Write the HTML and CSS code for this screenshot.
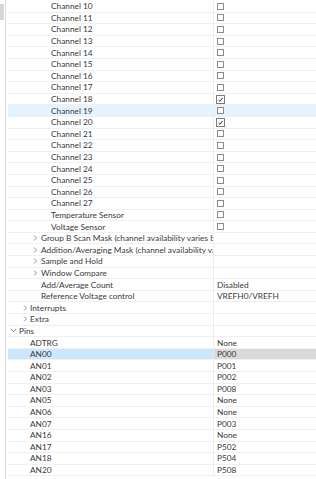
FILE: index.html
```html
<!DOCTYPE html>
<html>

<head>
    <meta charset="UTF-8">
    <title>Properties</title>
    <link rel="stylesheet" href="styles.css">
</head>

<body>
    <div class="frame">
        <div class="scroll-tab"></div>
        <div class="tree" id="tree"></div>
    </div>
    <script>
        // rows: [label, level, value, type, state]
        const rows = [];
        for (let i = 10; i <= 27; i++) {
            rows.push(['Channel ' + i, 4, '', 'check', i === 18 || i === 20]);
        }
        rows.push(['Temperature Sensor', 4, '', 'check', false]);
        rows.push(['Voltage Sensor', 4, '', 'check', false]);
        rows.push(['Group B Scan Mask (channel availability varies by MCU)', 3, '', 'closed']);
        rows.push(['Addition/Averaging Mask (channel availability varies by MCU)', 3, '', 'closed']);
        rows.push(['Sample and Hold', 3, '', 'closed']);
        rows.push(['Window Compare', 3, '', 'closed']);
        rows.push(['Add/Average Count', 3, 'Disabled']);
        rows.push(['Reference Voltage control', 3, 'VREFH0/VREFH']);
        rows.push(['Interrupts', 2, '', 'closed']);
        rows.push(['Extra', 2, '', 'closed']);
        rows.push(['Pins', 1, '', 'open']);
        const pins = [['ADTRG', 'None'], ['AN00', 'P000'], ['AN01', 'P001'], ['AN02', 'P002'],
            ['AN03', 'P008'], ['AN05', 'None'], ['AN06', 'None'], ['AN07', 'P003'],
            ['AN16', 'None'], ['AN17', 'P502'], ['AN18', 'P504'], ['AN20', 'P508']];
        pins.forEach(p => rows.push([p[0], 2, p[1]]));

        const tree = document.getElementById('tree');
        const chevronRight = '<svg width="5" height="6" viewBox="0 0 5 6"><path d="M1 0.5 L3.5 3 L1 5.5" fill="none" stroke="#8a8a8a" stroke-width="0.9"/></svg>';
        const chevronDown = '<svg width="7" height="5" viewBox="0 0 7 5"><path d="M0.8 1 L3.5 3.7 L6.2 1" fill="none" stroke="#6a6a6a" stroke-width="0.9"/></svg>';
        const checkMark = '<svg width="7" height="7" viewBox="0 0 7 7"><path d="M1.5 4 L3 5.3 L5.6 1.8" fill="none" stroke="#333" stroke-width="1"/></svg>';

        rows.forEach(r => {
            const [label, level, value, type, state] = r;
            const row = document.createElement('div');
            row.className = 'row';
            if (label === 'Channel 19') row.classList.add('hover');
            if (label === 'AN00') row.classList.add('selected');

            const name = document.createElement('div');
            name.className = 'name level' + level;
            let icon = '<span class="twisty"></span>';
            if (type === 'closed') icon = '<span class="twisty">' + chevronRight + '</span>';
            if (type === 'open') icon = '<span class="twisty">' + chevronDown + '</span>';
            name.innerHTML = icon + '<span class="label">' + label + '</span>';
            row.appendChild(name);

            const val = document.createElement('div');
            val.className = 'value';
            if (type === 'check') {
                val.innerHTML = state ? '<span class="box checked">' + checkMark + '</span>' : '<span class="box"></span>';
            } else {
                val.innerText = value;
            }
            row.appendChild(val);
            tree.appendChild(row);
        });
    </script>
</body>

</html>
```

FILE: styles.css
```css
body {
    margin: 0;
    background-color: #fff;
    font-family: Lato, "Noto Sans", sans-serif;
    font-size: 8.3px;
    color: #3a3a3a;
}

.frame {
    display: flex;
    height: 479px;
    overflow: hidden;
}

/* scroll tab at left edge */
.scroll-tab {
    position: absolute;
    left: 0;
    top: 4px;
    width: 4px;
    height: 16px;
    background-color: #d6d6d6;
}

.tree {
    flex: 1;
    margin-left: 5px;
    border-left: 1px solid #dcdcdc;
    padding-left: 2px;
    padding-top: 1px;
}

.row {
    display: flex;
    height: 11.6px;
    box-sizing: border-box;
    border-bottom: 1px solid #f0f0f0;
}

.row.hover {
    background-color: #e5f3ff;
}

.row.selected .name {
    background-color: #cce8ff;
}

.row.selected .value {
    background-color: #d9d9d9;
}

.name {
    width: 206px;
    flex-shrink: 0;
    display: flex;
    align-items: center;
    overflow: hidden;
    white-space: nowrap;
    border-right: 1px solid #ececec;
    box-sizing: border-box;
}

.level1 {
    padding-left: 2px;
}

.level2 {
    padding-left: 15px;
}

.level3 {
    padding-left: 25px;
}

.level4 {
    padding-left: 36px;
}

.twisty {
    width: 7px;
    flex-shrink: 0;
    display: flex;
    align-items: center;
}

.level3 .twisty {
    width: 8px;
}

.level1 .twisty {
    width: 9px;
}

.value {
    flex: 1;
    display: flex;
    align-items: center;
    padding-left: 3px;
    white-space: nowrap;
    overflow: hidden;
}

.box {
    width: 7px;
    height: 7px;
    box-sizing: border-box;
    border: 1px solid #8c8c8c;
    background-color: #fff;
}

.box.checked {
    width: 9px;
    height: 9px;
    margin-left: -1px;
    border-color: #7a7a7a;
    display: flex;
    align-items: center;
    justify-content: center;
}
```
